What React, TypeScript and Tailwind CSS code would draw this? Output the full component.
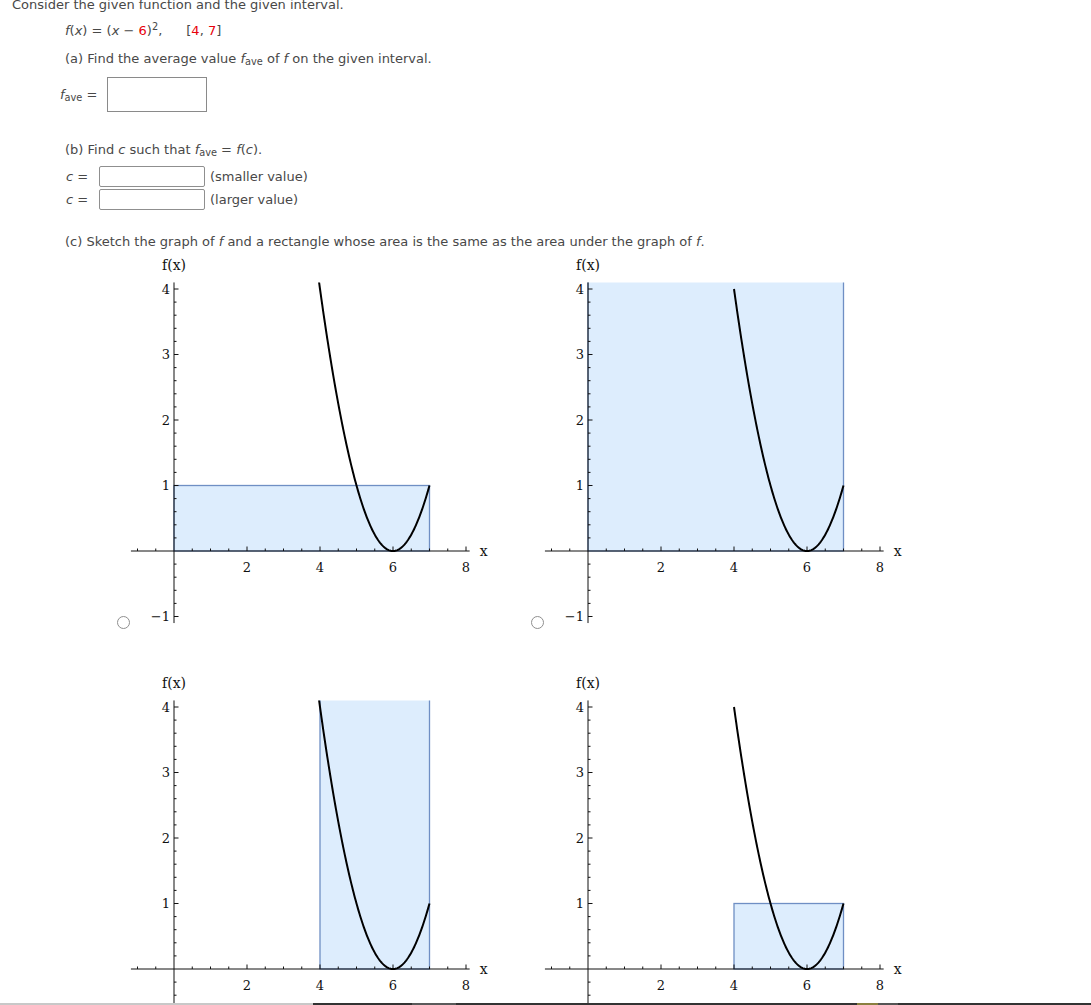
import React from 'react';

const XU = 36.5;
const YU = 65.5;
const OX = 44;
const OY = 298;
const W = 394;
const H = 380;

const px = (v: number) => OX + v * XU;
const py = (v: number) => OY - v * YU;

interface GraphProps {
    id: string;
    rect: [number, number, number]; // x0, x1, height
    start: number; // where the curve begins
}

const Graph: React.FC<GraphProps> = ({ id, rect, start }) => {
    const pts: string[] = [];
    for (let x = start; x <= 7.0001; x += 0.02) {
        pts.push(`${px(x).toFixed(2)},${py((x - 6) * (x - 6)).toFixed(2)}`);
    }

    const xTicks: number[] = [];
    for (let v = -1; v <= 8; v += 0.5) if (v !== 0) xTicks.push(v);
    const yTicks: number[] = [];
    for (let i = -5; i <= 20; i++) if (i !== 0) yTicks.push(i / 5);

    const serif = "'DejaVu Serif', 'Liberation Serif', serif";

    return (
        <svg width={W} height={H} viewBox={`0 0 ${W} ${H}`} className="block shrink-0">
            <defs>
                <clipPath id={id}>
                    <rect x={px(-1.2)} y={py(4.1)} width={px(8.1) - px(-1.2)} height={py(-1.2) - py(4.1)} />
                </clipPath>
            </defs>

            {/* rectangle with the same area */}
            <g clipPath={`url(#${id})`}>
                <rect
                    x={px(rect[0])}
                    y={py(rect[2])}
                    width={px(rect[1]) - px(rect[0])}
                    height={py(0) - py(rect[2])}
                    fill="#ddedfd"
                    stroke="#6f8fc4"
                    strokeWidth={1.3}
                />
            </g>

            {/* axes */}
            <line x1={px(-1.18)} y1={OY} x2={px(8.1)} y2={OY} stroke="#111" strokeWidth={1} />
            <line x1={OX} y1={py(4.1)} x2={OX} y2={py(-1.1)} stroke="#111" strokeWidth={1} />

            {xTicks.map(v => {
                const major = v % 2 === 0;
                return (
                    <line key={`x${v}`} x1={px(v)} y1={OY} x2={px(v)} y2={OY - (major ? 4.5 : 2.5)} stroke="#111" strokeWidth={1} />
                );
            })}
            {yTicks.map(v => {
                const major = Number.isInteger(v);
                return (
                    <line key={`y${v}`} x1={OX} y1={py(v)} x2={OX + (major ? 4.5 : 2.5)} y2={py(v)} stroke="#111" strokeWidth={1} />
                );
            })}

            {/* tick labels */}
            {[2, 4, 6, 8].map(v => (
                <text key={`lx${v}`} x={px(v)} y={OY + 21} textAnchor="middle" fontSize={13} fontFamily={serif} fill="#111">
                    {v}
                </text>
            ))}
            {[4, 3, 2, 1, -1].map(v => (
                <text key={`ly${v}`} x={OX - 4} y={py(v) + 4.5} textAnchor="end" fontSize={13} fontFamily={serif} fill="#111">
                    {v < 0 ? `−${-v}` : v}
                </text>
            ))}
            <text x={px(8.1) + 10} y={OY + 5} fontSize={14} fontFamily={serif} fill="#111">x</text>
            <text x={OX} y={17} textAnchor="middle" fontSize={14} fontFamily={serif} fill="#111">f(x)</text>

            {/* the function */}
            <g clipPath={`url(#${id})`}>
                <polyline points={pts.join(' ')} fill="none" stroke="#000" strokeWidth={2} strokeLinejoin="round" />
            </g>
        </svg>
    );
};

const Red: React.FC<{ children: React.ReactNode }> = ({ children }) => (
    <span className="text-[#e8000b]">{children}</span>
);

const graphs: GraphProps[] = [
    { id: 'g1', rect: [0, 7, 1], start: 3.9 },
    { id: 'g2', rect: [0, 7, 10], start: 4 },
    { id: 'g3', rect: [4, 7, 10], start: 3.9 },
    { id: 'g4', rect: [4, 7, 1], start: 4 },
];

export default function App() {
    return (
        <div className="h-[1005px] flex flex-col overflow-hidden bg-white">
            <div className="flex-1 min-h-0 overflow-hidden pl-[12px] text-[13px] leading-[16px] text-[#484848] font-['DejaVu_Sans','Verdana',sans-serif]">
                <p className="-mt-[3px]">Consider the given function and the given interval.</p>

                <div className="pl-[53px]">
                    <p className="mt-[10px]">
                        <i>f</i>(<i>x</i>) = (<i>x</i> − <Red>6</Red>)<sup>2</sup>,
                        <span className="ml-[24px]">[<Red>4</Red>, <Red>7</Red>]</span>
                    </p>

                    {/* Part (a) */}
                    <p className="mt-[12px]">
                        (a) Find the average value <i>f</i><sub>ave</sub> of <i>f</i> on the given interval.
                    </p>
                    <div className="mt-[10px] -ml-[5px] flex items-center">
                        <span><i>f</i><sub>ave</sub> =</span>
                        <input type="text" className="ml-[10px] w-[100px] h-[35px] border border-[#8a8a8a] bg-white outline-none" />
                    </div>

                    {/* Part (b) */}
                    <p className="mt-[30px]">
                        (b) Find <i>c</i> such that <i>f</i><sub>ave</sub> = <i>f</i>(<i>c</i>).
                    </p>
                    <div className="mt-[8px] flex flex-col gap-[2px]">
                        <div className="flex items-center">
                            <span className="ml-[1px] w-[24px]"><i>c</i> =</span>
                            <input type="text" className="ml-[9px] w-[106px] h-[21px] border border-[#8f8f8f] rounded-[2px] bg-white outline-none" />
                            <span className="ml-[5px]">(smaller value)</span>
                        </div>
                        <div className="flex items-center">
                            <span className="ml-[1px] w-[24px]"><i>c</i> =</span>
                            <input type="text" className="ml-[9px] w-[106px] h-[21px] border border-[#8f8f8f] rounded-[2px] bg-white outline-none" />
                            <span className="ml-[5px]">(larger value)</span>
                        </div>
                    </div>

                    {/* Part (c) */}
                    <p className="mt-[24px]">
                        (c) Sketch the graph of <i>f</i> and a rectangle whose area is the same as the area under the graph of <i>f</i>.
                    </p>
                </div>

                <div className="mt-[3px] ml-[98px] grid grid-cols-[414px_414px] gap-y-[38px]">
                    {graphs.map(g => (
                        <label key={g.id} className="flex items-end">
                            <input
                                type="radio"
                                name="sketch"
                                className="appearance-none shrink-0 ml-[7px] mb-[4px] w-[13px] h-[13px] rounded-full border border-[#8f8f8f] bg-white"
                            />
                            <Graph {...g} />
                        </label>
                    ))}
                </div>
            </div>

            {/* strip of the window below */}
            <div className="h-[2px] flex shrink-0">
                <div className="w-[313px] bg-[#c8c8c8]" />
                <div className="w-[99px] bg-[#333333]" />
                <div className="w-[44px] bg-[#5a5a5a]" />
                <div className="w-[401px] bg-[#333333]" />
                <div className="w-[21px] bg-[#8a8040]" />
                <div className="w-[20px] bg-[#555555]" />
                <div className="flex-1 bg-[#333333]" />
            </div>
        </div>
    );
}
